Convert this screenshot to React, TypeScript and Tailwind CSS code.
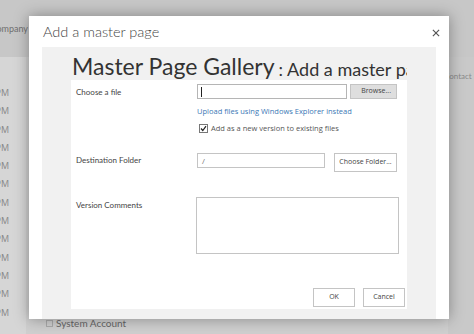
const gothic = "font-['Lato','Open_Sans',sans-serif]";
const segoe = "font-['Open_Sans','Liberation_Sans',sans-serif]";

const timeRows = Array.from({ length: 13 }, (_, i) => i);

function Background() {
  return (
    <div className="flex h-full w-full flex-col">
      <div className="flex h-[57px] items-center bg-[#c7c7c7]">
        <div className="flex w-[28px] justify-end overflow-hidden">
          <span className={`${gothic} whitespace-nowrap text-[9px] text-[#6f6f6f]`}>
            Company
          </span>
        </div>
      </div>
      <div className="flex flex-1 bg-[#cfcfcf]">
        <div className="flex w-[26px] flex-col gap-[6.3px] bg-[#d6d6d6] pt-[30px]">
          {timeRows.map((i) => (
            <div key={i} className="flex h-[12px] w-[9px] justify-end overflow-hidden">
              <span className={`${segoe} text-[9px] leading-[12px] text-[#888]`}>PM</span>
            </div>
          ))}
        </div>
        <div className="flex flex-1 flex-col justify-end pb-[5px] pl-[20px]">
          <div className="flex items-center gap-[3px]">
            <span className="h-[7px] w-[7px] border border-[#aaa]" />
            <span className={`${gothic} text-[10px] leading-[12px] text-[#666]`}>
              System Account
            </span>
          </div>
        </div>
        <div className="flex w-[26px] justify-start overflow-hidden bg-[#c9c9c9] pt-[13px]">
          <span className={`${gothic} -ml-[4px] h-[12px] text-[8px] text-[#8a8a8a]`}>
            Contact
          </span>
        </div>
      </div>
    </div>
  );
}

function Label({ children }: { children: React.ReactNode }) {
  return (
    <div className={`${gothic} w-[121px] shrink-0 text-[8px] leading-[10px] text-[#444]`}>
      {children}
    </div>
  );
}

function Dialog() {
  return (
    <div className="absolute left-[29px] top-[16px] flex h-[303px] w-[420px] flex-col bg-white shadow-[0_0_14px_rgba(0,0,0,0.35)]">
      <div className="flex h-[31px] shrink-0 items-center justify-between pl-[14px] pr-[9px] pt-[2px]">
        <span className={`${gothic} text-[14.5px] font-light leading-none text-[#444]`}>
          Add a master page
        </span>
        <svg width="8" height="8" viewBox="0 0 9 9">
          <path d="M1 1 L8 8 M8 1 L1 8" stroke="#555" strokeWidth="1.3" />
        </svg>
      </div>

      <div className="mx-[13px] flex flex-1 flex-col bg-[#f1f1f1] px-[29px] pb-[10px]">
        <div className="flex h-[33px] shrink-0 items-end overflow-hidden whitespace-nowrap pb-[2px] pl-[1px]">
          <span className={`${gothic} text-[23px] leading-none text-[#333]`}>
            Master Page Gallery
          </span>
          <span className={`${gothic} pl-[4px] text-[18px] leading-none text-[#333]`}>
            : Add a master page
          </span>
        </div>

        <div className="flex flex-1 flex-col bg-white pl-[5px] pr-[2px] pt-[4px]">
          <div className="flex">
            <div className="pt-[3px]">
              <Label>Choose a file</Label>
            </div>
            <div className="flex flex-col">
              <div className="flex">
                <div className="flex h-[15px] w-[150px] items-center border border-[#b5b5b5] bg-white pl-[3px]">
                  <span className="h-[10px] w-px bg-[#222]" />
                </div>
                <div
                  className={`${segoe} ml-[3px] flex h-[15px] w-[47px] items-center justify-end border border-[#c4c4c4] bg-[#dedede] pr-[5px] text-[7px] text-[#444]`}
                >
                  Browse...
                </div>
              </div>
              <div className={`${segoe} mt-[7px] text-[7.5px] leading-[10px] text-[#3a78b5]`}>
                Upload files using Windows Explorer instead
              </div>
              <div className="mt-[7px] flex items-center gap-[3px] pl-[2px]">
                <span className="flex h-[9px] w-[9px] items-center justify-center border border-[#777] bg-white">
                  <svg width="7" height="7" viewBox="0 0 7 7">
                    <path d="M1 3.5 L2.8 5.5 L6 1.2" fill="none" stroke="#222" strokeWidth="1.2" />
                  </svg>
                </span>
                <span className={`${segoe} text-[7.5px] leading-[10px] text-[#555]`}>
                  Add as a new version to existing files
                </span>
              </div>
            </div>
          </div>

          <div className="mt-[20px] flex">
            <div className="pt-[2px]">
              <Label>Destination Folder</Label>
            </div>
            <div className="flex h-[15px] w-[128px] items-center border border-[#c4c4c4] bg-white pl-[4px]">
              <span className={`${segoe} text-[8px] text-[#777]`}>/</span>
            </div>
            <div
              className={`${segoe} ml-[9px] flex h-[19px] w-[63px] items-center justify-center border border-[#c4c4c4] bg-white text-[7px] text-[#444]`}
            >
              Choose Folder...
            </div>
          </div>

          <div className="mt-[25px] flex">
            <div className="pt-[3px]">
              <Label>Version Comments</Label>
            </div>
            <div className="-ml-[1px] h-[57px] w-[203px] border border-[#c4c4c4] bg-white" />
          </div>

          <div className="mt-auto flex justify-end gap-[8px] pb-[2px]">
            <div
              className={`${segoe} flex h-[19px] w-[42px] items-center justify-center border border-[#c4c4c4] bg-white text-[7px] text-[#444]`}
            >
              OK
            </div>
            <div
              className={`${segoe} flex h-[19px] w-[42px] items-center justify-center border border-[#c4c4c4] bg-white text-[7px] text-[#444]`}
            >
              Cancel
            </div>
          </div>
        </div>
      </div>
    </div>
  );
}

export default function App() {
  return (
    <div className="relative h-[334px] w-[474px] overflow-hidden bg-[#cfcfcf]">
      <Background />
      <Dialog />
    </div>
  );
}
